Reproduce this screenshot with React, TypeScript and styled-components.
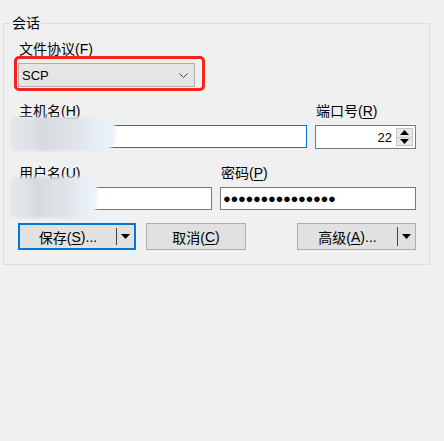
import styled, { createGlobalStyle } from "styled-components";

const GlobalStyle = createGlobalStyle`
  html, body {
    margin: 0;
    background: #f0f0f0;
  }
  body {
    font-family: "Liberation Sans", "Noto Sans CJK SC", sans-serif;
    color: #000;
  }
`;

const Key = ({ children }: { children: string }) => (
	<>
		(<Mnemonic>{children}</Mnemonic>)
	</>
);

const DownTriangle = () => (
	<svg width="9" height="5" viewBox="0 0 9 5">
		<path d="M0 0h9L4.5 5z" fill="#000" />
	</svg>
);

export default function App() {
	return (
		<>
			<GlobalStyle />
			<Page>
				<Group>
					<Caption>会话</Caption>

					<Row $columns="177px">
						<Field>
							<Label>
								文件协议<Key>F</Key>
							</Label>
							<ComboBox>
								<span>SCP</span>
								<svg width="9" height="5" viewBox="0 0 9 5">
									<path d="M0.5 0.5l4 4 4-4" fill="none" stroke="#444" strokeWidth="1" />
								</svg>
								<Highlight />
							</ComboBox>
						</Field>
					</Row>

					<Row $columns="289px 101px">
						<Field>
							<Label>
								主机名<Key>H</Key>
							</Label>
							<TextBox $focused />
							<Blur $top={15} $width={106} $height={34} />
						</Field>
						<Field>
							<Label>
								端口号<Key>R</Key>
							</Label>
							<PortBox>
								<PortValue>22</PortValue>
								<Spinner>
									<SpinButton>
										<svg width="9" height="5" viewBox="0 0 9 5">
											<path d="M0 5h9L4.5 0z" fill="#000" />
										</svg>
									</SpinButton>
									<SpinButton>
										<DownTriangle />
									</SpinButton>
								</Spinner>
							</PortBox>
						</Field>
					</Row>

					<Row $columns="194px 196px">
						<Field>
							<Label>
								用户名<Key>U</Key>
							</Label>
							<TextBox />
							<Blur $top={13} $width={87} $height={41} />
						</Field>
						<Field>
							<Label>
								密码<Key>P</Key>
							</Label>
							<TextBox>
								<Dots>●●●●●●●●●●●●●●●</Dots>
							</TextBox>
						</Field>
					</Row>

					<ButtonRow>
						<Button $width={118} $primary>
							<ButtonText>
								保存<Key>S</Key>...
							</ButtonText>
							<SplitPart>
								<DownTriangle />
							</SplitPart>
						</Button>
						<Button $width={100}>
							<ButtonText>
								取消<Key>C</Key>
							</ButtonText>
						</Button>
						<Spacer />
						<Button $width={119}>
							<ButtonText>
								高级<Key>A</Key>...
							</ButtonText>
							<SplitPart>
								<DownTriangle />
							</SplitPart>
						</Button>
					</ButtonRow>
				</Group>
			</Page>
		</>
	);
}

const Page = styled.div`
	width: 444px;
	height: 441px;
	box-sizing: border-box;
	padding: 14px 0 0 3px;
`;

const Group = styled.fieldset`
	box-sizing: border-box;
	width: 427px;
	margin: 0;
	min-inline-size: 0;
	border: 1px solid #dcdcdc;
	padding: 8px 12px 14px 14px;
	display: flex;
	flex-direction: column;
	gap: 15px;
`;

const Caption = styled.legend`
	font-size: 14px;
	line-height: 18px;
	padding: 0 2px;
	margin-left: -8px;
	background: #f0f0f0;
`;

const Row = styled.div<{ $columns: string }>`
	display: grid;
	grid-template-columns: ${({ $columns }) => $columns};
	column-gap: 8px;
`;

const Field = styled.div`
	position: relative;
	display: flex;
	flex-direction: column;
`;

const Label = styled.div`
	font-size: 14px;
	line-height: 18px;
	height: 18px;
	margin: 0 0 5px 1px;
	white-space: nowrap;
`;

const Mnemonic = styled.span`
	text-decoration: underline;
	text-underline-offset: 2px;
`;

const ComboBox = styled.div`
	position: relative;
	box-sizing: border-box;
	height: 24px;
	display: flex;
	align-items: center;
	justify-content: space-between;
	padding: 0 6px 0 3px;
	background: #e5e5e5;
	border: 1px solid #adadad;
	font-size: 13px;
`;

const Highlight = styled.div`
	position: absolute;
	left: -5px;
	top: -8px;
	right: -11px;
	bottom: -5px;
	border: 3px solid #f5231b;
	border-radius: 5px;
	pointer-events: none;
`;

const TextBox = styled.div<{ $focused?: boolean }>`
	box-sizing: border-box;
	height: 23px;
	display: flex;
	align-items: center;
	padding: 0 2px;
	background: #fff;
	border: 1px solid ${({ $focused }) => ($focused ? "#0078d7" : "#7a7a7a")};
`;

const PortBox = styled(TextBox)`
	height: 24px;
	justify-content: flex-end;
	padding: 0 2px 0 3px;
	gap: 4px;
`;

const PortValue = styled.span`
	font-size: 13px;
`;

const Spinner = styled.div`
	display: flex;
	flex-direction: column;
	width: 17px;
	height: 18px;
	border: 1px solid #c4c4c4;
	box-sizing: border-box;
`;

const SpinButton = styled.div`
	flex: 1;
	display: flex;
	align-items: center;
	justify-content: center;
	background: #e9e9e9;
	& + & {
		border-top: 1px solid #c4c4c4;
	}
`;

const Dots = styled.span`
	font-family: "Liberation Sans", sans-serif;
	font-size: 13px;
	letter-spacing: -0.35px;
	line-height: 1;
`;

const Blur = styled.div<{ $top: number; $width: number; $height: number }>`
	position: absolute;
	left: -8px;
	top: ${({ $top }) => $top}px;
	width: ${({ $width }) => $width}px;
	height: ${({ $height }) => $height}px;
	border-radius: 4px 14px 14px 4px;
	background: linear-gradient(
		90deg,
		#e2e7ec 0%,
		#dfe3e7 18%,
		#d6dade 32%,
		#dde1e5 50%,
		#e1e5e9 66%,
		#e6edf5 82%,
		#edf3fa 100%
	);
	filter: blur(1.5px);
`;

const ButtonRow = styled.div`
	display: flex;
	align-items: center;
	gap: 10px;
	margin-top: -2px;
	padding-right: 1px;
`;

const Spacer = styled.div`
	flex: 1;
`;

const Button = styled.div<{ $width: number; $primary?: boolean }>`
	box-sizing: border-box;
	width: ${({ $width }) => $width}px;
	height: 27px;
	display: flex;
	align-items: stretch;
	background: #e1e1e1;
	border: ${({ $primary }) => ($primary ? "2px solid #0078d7" : "1px solid #adadad")};
	font-size: 14px;
`;

const ButtonText = styled.div`
	flex: 1;
	display: flex;
	align-items: center;
	justify-content: center;
	white-space: nowrap;
`;

const SplitPart = styled.div`
	width: 17px;
	margin: 3px 0;
	display: flex;
	align-items: center;
	justify-content: center;
	border-left: 1px solid #444;
`;
